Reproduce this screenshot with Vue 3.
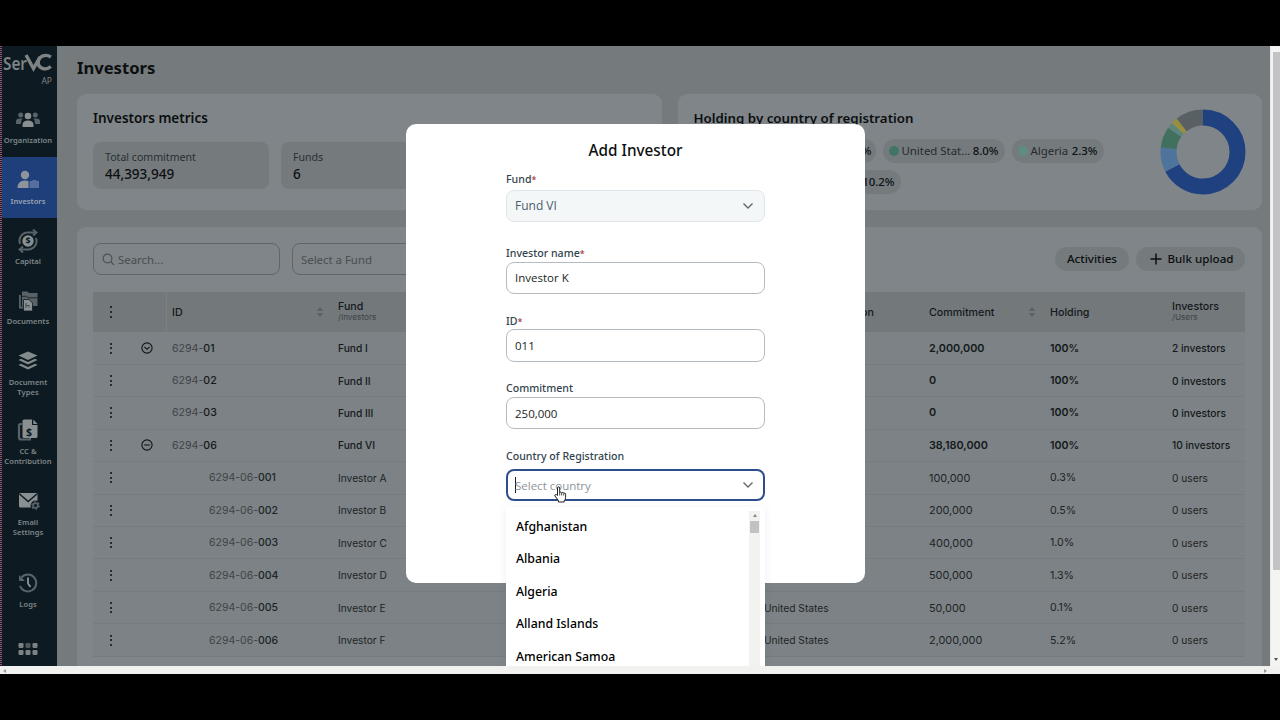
<template>
  <div class="frame">
    <div class="screen">
      <aside class="sidebar">
        <div class="logo">
          <svg width="50" height="28" viewBox="0 -3 50 28">
            <text x="0" y="17" class="logo-text" textLength="24" lengthAdjust="spacingAndGlyphs">Ser</text>
            <path d="M23 2 L30.5 15.500 L37 4" fill="none" stroke="#7e8385" stroke-width="3.400" />
            <path d="M47.800 4.200 C43 0.500 36 3 35.200 9 C35 15.500 42.500 18 47.800 13.500" fill="none" stroke="#7e8385" stroke-width="3.400" />
          </svg>
          <span class="logo-sub">AP</span>
        </div>
        <div
          v-for="item in menu"
          :key="item.icon"
          class="menu-item"
          :class="[item.icon, { active: item.active }]"
        >
          <svg class="menu-icon" width="24" height="24" viewBox="0 0 24 24">
            <g v-if="item.icon === 'organization'">
              <g fill="#596267">
                <circle cx="4.7" cy="7" r="2.5" />
                <circle cx="19.3" cy="7" r="2.5" />
                <path d="M0 16 v-2.500 q0-3 3.500-3 h3 q-1.500 2-1.500 5.500z" />
                <path d="M24 16 v-2.500 q0-3-3.500-3 h-3 q1.500 2 1.500 5.500z" />
              </g>
              <circle cx="12" cy="8" r="3.300" fill="#8a9092" />
              <path d="M6.500 19 v-2 q0-4.500 5.500-4.500 t5.500 4.500 v2z" fill="#8a9092" />
            </g>
            <g v-else-if="item.icon === 'investors'">
              <circle cx="9" cy="7" r="4.200" fill="#8d949b" />
              <path d="M1.500 20 q0-7.500 7.500-7.500 q3 0 3.500 1 v6.500z" fill="#8d949b" />
              <path d="M13.500 13 h3 v-1 h4 v1 h2.500 v7 h-9.500z" fill="#55709c" />
            </g>
            <g v-else-if="item.icon === 'capital'">
              <g fill="none" stroke="#596267" stroke-width="1.900">
                <path d="M4 15 A8.500 8.500 0 0 1 11 3.500 h8" />
                <path d="M20 9 A8.500 8.500 0 0 1 13 20.500 h-8" />
                <path d="M17 0.500 l3.500 3 l-3.500 3" />
                <path d="M7 17.500 l-3.500 3 l3.500 3" />
              </g>
              <circle cx="12" cy="12" r="5.700" fill="#8a9092" />
              <text x="12" y="15.200" class="dollar">$</text>
            </g>
            <g v-else-if="item.icon === 'documents'">
              <path d="M6 2.500 h5.500 l1.500 1.500 h8.500 v13 h-15.500z" fill="#596267" />
              <path d="M3.900 6 v12.500 h5" fill="none" stroke="#596267" stroke-width="1.800" />
              <path d="M6 7.300 h4.500 l1.500 1.500 h9.500" fill="none" stroke="#0d1a21" stroke-width="0.800" />
              <path d="M7.500 10.500 h5.500 l3.500 3.500 v8 h-9z" fill="#8a9092" stroke="#0d1a21" stroke-width="0.800" />
              <path d="M10 14 v5 M10 16.500 h3 v2" fill="none" stroke="#3d464b" />
            </g>
            <g v-else-if="item.icon === 'types'" fill="#838a8c">
              <path d="M12 2.500 l9.500 4 l-9.500 4.500 l-9.500-4.500z" />
              <path d="M2.500 11 l2.500-1.200 l7 3.200 l7-3.200 l2.500 1.200 l-9.500 4.500z" />
              <path d="M2.500 16 l2.500-1.200 l7 3.200 l7-3.200 l2.500 1.200 l-9.500 4.500z" />
            </g>
            <g v-else-if="item.icon === 'contribution'">
              <path d="M6 6 h-1.500 q-1.500 0-1.500 1.500 v12 q0 2 2 2 h9 v-1.500" fill="none" stroke="#596267" stroke-width="2.200" />
              <path d="M8 1.500 h8 v5.500 h5.500 v11.500 q0 1.500-1.500 1.500 h-12 q-1.500 0-1.500-1.500 v-15.500 q0-1.500 1.500-1.500z" fill="#8a9092" />
              <path d="M17.300 1.500 l4.200 4.400 h-4.200z" fill="#8a9092" />
              <text x="13" y="17.500" class="dollar large">$</text>
            </g>
            <g v-else-if="item.icon === 'email'">
              <rect x="3" y="4" width="18.500" height="14.500" rx="1.500" fill="#8a9092" />
              <path d="M3.500 5 l8.700 7.500 l8.700-7.500" fill="none" stroke="#0d1a21" stroke-width="1.500" />
              <circle cx="19.500" cy="16.500" r="5" fill="#0d1a21" />
              <circle cx="19.500" cy="16.500" r="2.400" fill="none" stroke="#596267" stroke-width="1.700" />
              <circle cx="19.500" cy="16.500" r="3.700" fill="none" stroke="#596267" stroke-width="1.300" stroke-dasharray="1.900 1.970" />
            </g>
            <g v-else-if="item.icon === 'logs'">
              <path d="M5.500 6.500 A8.400 8.400 0 1 1 4 15" fill="none" stroke="#596267" stroke-width="2" />
              <path d="M3 4 v6 h6z" fill="#596267" />
              <path d="M12 6.500 v6 l2.500 3.500" fill="none" stroke="#8a9092" stroke-width="1.900" />
            </g>
            <g v-else fill="#7c8385">
              <rect v-for="n in 6" :key="n" :x="2.500 + ((n - 1) % 3) * 7" :y="n > 3 ? 13 : 6" width="5" height="5" rx="1.300" :opacity="n === 2 ? 0.6 : 1" />
            </g>
          </svg>
          <span class="menu-label">{{ item.label }}</span>
        </div>
      </aside>

      <main class="main">
        <h1>Investors</h1>
        <div class="summary">
          <section class="card">
            <h2>Investors metrics</h2>
            <div class="metrics">
              <div v-for="metric in metrics" :key="metric.label" class="metric">
                <span>{{ metric.label }}</span>
                <strong>{{ metric.value }}</strong>
              </div>
            </div>
          </section>
          <section class="card holding">
            <div class="holding-info">
              <h2>Holding by country of registration</h2>
              <div class="chips">
                <div v-for="chip in chips" :key="chip.name" class="chip" :style="{ width: chip.width + 'px' }">
                  <i :style="{ background: chip.color }"></i>
                  <span>{{ chip.name }}</span>
                  <b>{{ chip.value }}</b>
                </div>
              </div>
            </div>
            <svg class="donut" width="86" height="86" viewBox="0 0 86 86">
              <circle
                v-for="slice in slices"
                :key="slice.start"
                cx="43"
                cy="43"
                r="34.500"
                fill="none"
                :stroke="slice.color"
                stroke-width="16"
                pathLength="100"
                :stroke-dasharray="`${slice.size} ${100 - slice.size}`"
                :stroke-dashoffset="-slice.start"
                transform="rotate(-90 43 43)"
              />
            </svg>
          </section>
        </div>

        <section class="card listing">
          <div class="toolbar">
            <div class="filter">
              <svg width="13" height="13" viewBox="0 0 13 13" fill="none" stroke="#4b5154" stroke-width="1.200">
                <circle cx="5.500" cy="5.500" r="4.400" />
                <path d="M8.700 8.700 L12 12" />
              </svg>
              Search...
            </div>
            <div class="filter">Select a Fund</div>
            <div class="actions">
              <button>Activities</button>
              <button>
                <svg width="12" height="12" viewBox="0 0 12 12" stroke="#0c0f10" stroke-width="1.500">
                  <path d="M6 0.500 v11 M0.500 6 h11" />
                </svg>
                Bulk upload
              </button>
            </div>
          </div>

          <div class="table">
            <div class="row head">
              <div class="dots"><i></i><i></i><i></i></div>
              <div></div>
              <div class="id-head">ID <span class="sort"></span></div>
              <div class="stacked">Fund<small>/Investors</small></div>
              <div class="country-head">Registration</div>
              <div>Commitment <span class="sort"></span></div>
              <div>Holding</div>
              <div class="stacked">Investors<small>/Users</small></div>
            </div>
            <div v-for="row in rows" :key="row.id" class="row" :class="{ child: row.child }">
              <div class="dots"><i></i><i></i><i></i></div>
              <div class="toggle">
                <svg v-if="row.toggle" width="12" height="12" viewBox="0 0 12 12" fill="none" stroke="#101415" stroke-width="1.100">
                  <circle cx="6" cy="6" r="5.100" />
                  <path :d="row.toggle === 'open' ? 'M3.200 6 h5.600' : 'M3.500 5 l2.500 2.300 l2.500-2.300'" />
                </svg>
              </div>
              <div class="id"><span>{{ row.prefix }}</span>{{ row.id }}</div>
              <div class="name">{{ row.name }}</div>
              <div class="name">{{ row.country }}</div>
              <div class="amount">{{ row.commitment }}</div>
              <div class="share">{{ row.holding }}</div>
              <div class="name">{{ row.users }}</div>
            </div>
          </div>
        </section>
      </main>

      <div class="modal">
        <h3>Add Investor</h3>
        <div class="field fund">
          <label>Fund<em>*</em></label>
          <div class="control disabled">Fund VI
            <svg width="12" height="8" viewBox="0 0 12 8"><path d="M1.500 1.500 L6 6 L10.500 1.500" /></svg>
          </div>
        </div>
        <div class="field">
          <label>Investor name<em>*</em></label>
          <div class="control">Investor K</div>
        </div>
        <div class="field">
          <label>ID<em>*</em></label>
          <div class="control">011</div>
        </div>
        <div class="field">
          <label>Commitment</label>
          <div class="control">250,000</div>
        </div>
        <div class="field country">
          <label>Country of Registration</label>
          <div class="control focused"><span class="caret"></span>Select country
            <svg width="12" height="8" viewBox="0 0 12 8"><path d="M1.500 1.500 L6 6 L10.500 1.500" /></svg>
          </div>
          <div class="dropdown">
            <ul>
              <li v-for="country in countries" :key="country">{{ country }}</li>
            </ul>
            <div class="dropdown-scroll"><i></i></div>
          </div>
          <svg class="cursor" width="13" height="17" viewBox="0 0 13 17">
            <path d="M3.500 9.500 V2 q0-1.200 1.100-1.200 t1.100 1.200 V6.500 q1-.9 2 .2 q1.100-.8 2 .3 q1.700-.5 1.900 1.200 v3.300 q0 2-1.400 3.200 v1.300 h-5.700 v-1.300 l-3.500-4.700 q-.6-1.200.5-1.500 q.9-.2 2 1z" fill="#fff" stroke="#222" stroke-width="1" />
            <path d="M5.700 6.500 v3 M7.700 7 v2.500 M9.700 7.500 v2" stroke="#222" stroke-width="0.800" />
          </svg>
        </div>
      </div>

      <div class="scroll-y"><i></i></div>
      <div class="scroll-x"></div>
    </div>
  </div>
</template>

<script setup>
const menu = [
  { icon: 'organization', label: 'Organization' },
  { icon: 'investors', label: 'Investors', active: true },
  { icon: 'capital', label: 'Capital' },
  { icon: 'documents', label: 'Documents' },
  { icon: 'types', label: 'Document Types' },
  { icon: 'contribution', label: 'CC & Contribution' },
  { icon: 'email', label: 'Email Settings' },
  { icon: 'logs', label: 'Logs' },
  { icon: 'more', label: '' },
];

const metrics = [
  { label: 'Total commitment', value: '44,393,949' },
  { label: 'Funds', value: '6' },
  { label: 'Investors', value: '12' },
];

const chips = [
  { name: 'Israel', value: '67.4%', color: '#1f4180', width: 90 },
  { name: 'Cana...', value: '9.3%', color: '#55799f', width: 85 },
  { name: 'United Stat...', value: '8.0%', color: '#407565', width: 122 },
  { name: 'Algeria', value: '2.3%', color: '#5f8c82', width: 92 },
  { name: 'France', value: '2.4%', color: '#a39a45', width: 100 },
  { name: 'Others', value: '10.2%', color: '#596064', width: 100 },
];

const slices = [
  { start: 0, size: 67.4, color: '#1f4180' },
  { start: 67.4, size: 9.3, color: '#4f749b' },
  { start: 76.7, size: 8, color: '#42705f' },
  { start: 84.7, size: 2.3, color: '#5b857d' },
  { start: 87, size: 2.4, color: '#98903f' },
  { start: 89.4, size: 10.6, color: '#596064' },
];

const rows = [
  { prefix: '6294-', id: '01', name: 'Fund I', commitment: '2,000,000', holding: '100%', users: '2 investors', toggle: 'closed' },
  { prefix: '6294-', id: '02', name: 'Fund II', commitment: '0', holding: '100%', users: '0 investors' },
  { prefix: '6294-', id: '03', name: 'Fund III', commitment: '0', holding: '100%', users: '0 investors' },
  { prefix: '6294-', id: '06', name: 'Fund VI', commitment: '38,180,000', holding: '100%', users: '10 investors', toggle: 'open' },
  { prefix: '6294-06-', id: '001', name: 'Investor A', country: 'United States', commitment: '100,000', holding: '0.3%', users: '0 users', child: true },
  { prefix: '6294-06-', id: '002', name: 'Investor B', country: 'United States', commitment: '200,000', holding: '0.5%', users: '0 users', child: true },
  { prefix: '6294-06-', id: '003', name: 'Investor C', country: 'United States', commitment: '400,000', holding: '1.0%', users: '0 users', child: true },
  { prefix: '6294-06-', id: '004', name: 'Investor D', country: 'United States', commitment: '500,000', holding: '1.3%', users: '0 users', child: true },
  { prefix: '6294-06-', id: '005', name: 'Investor E', country: 'United States', commitment: '50,000', holding: '0.1%', users: '0 users', child: true },
  { prefix: '6294-06-', id: '006', name: 'Investor F', country: 'United States', commitment: '2,000,000', holding: '5.2%', users: '0 users', child: true },
];

const countries = ['Afghanistan', 'Albania', 'Algeria', 'Alland Islands', 'American Samoa'];
</script>

<style>
body {
  margin: 0;
  background: #000;
}
</style>

<style scoped>
* {
  box-sizing: border-box;
}

.frame {
  height: 720px;
  padding: 46px 0;
  background: #000;
  overflow: hidden;
  font-family: "Noto Sans", "Open Sans", sans-serif;
  color: #0c0f10;
}

.screen {
  position: relative;
  display: grid;
  grid-template: 620px 8px / 57px 1213px 10px;
  overflow: hidden;
}

.sidebar {
  position: relative;
  background: #0d1a21;
  overflow: hidden;
}

.sidebar::before {
  content: "";
  position: absolute;
  left: 0;
  top: 0;
  bottom: 0;
  width: 1.5px;
  background: repeating-linear-gradient(#8c5c70 0 1px, #1c1420 1px 2px);
}

.logo {
  height: 51px;
  padding: 4px 0 0 3px;
  color: #7e8385;
}

.logo svg {
  display: block;
}

.logo-text {
  font: 600 18px "Noto Sans", sans-serif;
  fill: #7e8385;
}

.logo-sub {
  display: block;
  margin: -3px 5px 0 0;
  font-size: 8.5px;
  line-height: 12px;
  text-align: right;
}

.menu-item {
  display: flex;
  flex-direction: column;
  align-items: center;
  height: 60.4px;
  padding: 10.8px 1px 0 0;
  color: #7e8588;
}

.menu-item.active {
  background: #1f3f7a;
  color: #9aa4b3;
}

.menu-item.types {
  height: 69px;
}

.menu-item.contribution {
  height: 71px;
}

.menu-item.email {
  height: 82px;
}

.menu-item.logs {
  height: 66px;
}

.menu-icon {
  flex: none;
}

.menu-label {
  margin-top: 3.4px;
  font-size: 7.6px;
  font-weight: 600;
  line-height: 10px;
  text-align: center;
}

.menu-item.types .menu-label,
.menu-item.email .menu-label {
  width: 44px;
}

.dollar {
  font: 700 9px "Noto Sans", sans-serif;
  fill: #0d1a21;
  text-anchor: middle;
}

.dollar.large {
  font-size: 10.5px;
}

.main {
  padding: 0 8px 0 20px;
  background: #757a7d;
  overflow: hidden;
}

h1 {
  height: 48px;
  margin: 0;
  font-size: 16.6px;
  font-weight: 700;
  line-height: 43px;
}

h2 {
  margin: 0;
  font-size: 13.5px;
  font-weight: 600;
  line-height: 20px;
}

.holding h2 {
  font-size: 13.3px;
}

.summary {
  display: grid;
  grid-template-columns: 1fr 1fr;
  gap: 16px;
}

.card {
  height: 116px;
  padding: 14px 16px;
  border-radius: 9px;
  background: #7f8588;
}

.metrics {
  display: grid;
  grid-template-columns: repeat(3, 176px);
  gap: 12px;
  margin-top: 14px;
}

.metric {
  height: 47px;
  padding: 7px 12px;
  border-radius: 8px;
  background: #757a7d;
}

.metric span {
  display: block;
  font-size: 10.6px;
  line-height: 17px;
  color: #253036;
}

.metric strong {
  display: block;
  font-size: 13.5px;
  font-weight: 500;
  line-height: 17px;
}

.holding {
  display: flex;
  justify-content: space-between;
}

.chips {
  display: flex;
  flex-wrap: wrap;
  gap: 7px;
  width: 430px;
  margin-top: 11px;
}

.chip {
  display: flex;
  align-items: center;
  height: 24px;
  padding: 0 6px;
  border-radius: 12px;
  background: #757a7d;
  font-size: 11.4px;
  line-height: 22px;
  white-space: nowrap;
  color: #242b2f;
}

.chip i {
  flex: none;
  width: 10px;
  height: 10px;
  margin-right: 3px;
  border-radius: 50%;
}

.chip b {
  margin-left: auto;
  font-weight: 500;
  color: #0c1216;
}

.donut {
  flex: none;
  margin: 1px 0 0;
}

.listing {
  height: 500px;
  margin-top: 17px;
  padding: 16px 17px 16px 16px;
}

.toolbar {
  display: flex;
  gap: 12px;
  height: 49px;
}

.filter {
  display: flex;
  align-items: center;
  gap: 3px;
  width: 187px;
  height: 32px;
  padding: 0 8px;
  border: 1px solid #5f6568;
  border-radius: 8px;
  font-size: 11.4px;
  color: #484e51;
}

.actions {
  display: flex;
  gap: 7px;
  margin: 4px 0 0 auto;
}

button {
  display: flex;
  align-items: center;
  justify-content: center;
  gap: 6px;
  width: 74px;
  height: 24px;
  padding: 0 0 1px;
  border: 0;
  border-radius: 12px;
  background: #757a7d;
  font: 500 11.6px "Noto Sans", sans-serif;
  color: #0c0f10;
}

button + button {
  width: 109px;
  padding-left: 2px;
}

.table {
  font-family: Inter, sans-serif;
  font-size: 10.6px;
}

.row {
  display: grid;
  grid-template-columns: 36px 37px 165px 426px 165px 121px 122px 80px;
  height: 32.45px;
  border-bottom: 1px solid #757b7e;
  background: #7c8285;
  color: #14191b;
  font-weight: 500;
}

.row > div {
  display: flex;
  align-items: center;
  padding-left: 7px;
  white-space: nowrap;
}

.row.head {
  height: 40.4px;
  border: 0;
  background: #73787b;
  font-size: 10.7px;
}

.row.head > .id-head {
  padding-left: 5px;
  border-left: 1px solid #7c8184;
}

.row > .id {
  padding-left: 6px;
}

.row > .dots,
.row > .toggle {
  flex-direction: column;
  justify-content: center;
  gap: 2.5px;
  padding: 0;
}

.row > .toggle {
  padding-right: 1px;
}

.dots i {
  width: 2px;
  height: 2px;
  border-radius: 50%;
  background: #0c0f10;
}

.head .dots i {
  width: 2.5px;
  height: 2.5px;
}

.row > .stacked {
  flex-direction: column;
  align-items: flex-start;
  justify-content: center;
  padding-bottom: 1px;
  line-height: 12px;
}

.stacked small {
  font-size: 8.2px;
  font-weight: 400;
  line-height: 9px;
  color: #3b4347;
}

.row > .country-head {
  justify-content: flex-end;
  padding-right: 48px;
}

.sort {
  display: flex;
  flex-direction: column;
  gap: 2px;
  margin: 0 8px 0 auto;
}

.sort::before,
.sort::after {
  content: "";
  border: 3.5px solid transparent;
  border-top: 0;
  border-bottom: 4.5px solid #5c6265;
}

.sort::after {
  transform: rotate(180deg);
}

.id span {
  font-weight: 400;
  color: #3d4548;
}

.row > .name {
  font-size: 10.2px;
}

.row > .amount {
  font-size: 10.8px;
}

.row.child {
  font-weight: 400;
  color: #1d2427;
}

.row.child > .id {
  padding-left: 43px;
  font-size: 10.5px;
  font-weight: 500;
}

.row.child > .amount {
  font-size: 10.9px;
}

.row:not(.child) .amount,
.row:not(.child) .share {
  font-weight: 600;
}

.modal {
  position: absolute;
  left: 406px;
  top: 78px;
  width: 459px;
  height: 459px;
  padding: 0 100px;
  border-radius: 10px;
  background: #fff;
}

h3 {
  height: 47px;
  margin: 0;
  font-size: 15.3px;
  font-weight: 500;
  line-height: 53px;
  text-align: center;
}

.field {
  height: 67.7px;
}

.field.fund {
  height: 73px;
}

.field.country {
  position: relative;
}

label {
  display: block;
  height: 17.5px;
  font-size: 10.6px;
  font-weight: 500;
  line-height: 18px;
  color: #33434d;
}

.fund label {
  height: 18.5px;
  line-height: 16px;
}

.country label {
  height: 21.9px;
}

em {
  font-style: normal;
  font-size: 9px;
  color: #a33636;
}

.control {
  display: flex;
  align-items: center;
  width: 259px;
  height: 32.5px;
  padding: 0 10px 0 8px;
  border: 1px solid #b4bcc2;
  border-radius: 8px;
  background: #fff;
  font: 11.5px "Open Sans", sans-serif;
  color: #1a1f22;
}

.control.disabled {
  border-color: #dfe5e8;
  background: #f4f7f8;
  font-size: 12px;
  color: #4a5d6b;
}

.control.focused {
  border: 2px solid #2c4f8c;
  padding: 0 9px 0 7px;
  color: #8c949a;
}

.control svg {
  margin-left: auto;
  fill: none;
  stroke: #61686c;
  stroke-width: 1.4;
}

.caret {
  width: 1px;
  height: 16px;
  margin-right: -1px;
  background: #222;
}

.dropdown {
  position: absolute;
  top: 60px;
  left: 0;
  display: flex;
  width: 259px;
  height: 220px;
  padding: 4px 5px 0 0;
  background: #fff;
  box-shadow: 0 2px 8px rgba(60, 90, 130, 0.1);
}

ul {
  flex: 1;
  margin: 0;
  padding: 0;
  list-style: none;
}

li {
  padding-left: 10px;
  font-size: 12.3px;
  font-weight: 500;
  line-height: 32.4px;
  color: #000;
}

.dropdown-scroll {
  width: 11px;
  padding: 3px 1px;
  background: #f2f2f1;
}

.dropdown-scroll::before {
  content: "";
  display: block;
  width: 0;
  margin: 0 auto 4px;
  border: 2.5px solid transparent;
  border-top: 0;
  border-bottom: 3px solid #888;
}

.dropdown-scroll i {
  display: block;
  height: 12px;
  background: #c2c2c2;
}

.cursor {
  position: absolute;
  left: 48px;
  top: 39px;
}

.scroll-y {
  position: relative;
  padding: 6px 0 0 2px;
  border-left: 1px solid #e8e8e8;
  background: #f4f4f3;
}

.scroll-y i {
  display: block;
  height: 518px;
  background: #c1c3c4;
}

.scroll-y::after {
  content: "";
  position: absolute;
  left: 3px;
  bottom: 5px;
  border: 2.5px solid transparent;
  border-bottom: 0;
  border-top: 3px solid #555;
}

.scroll-x {
  position: relative;
  grid-column: 1 / -1;
  background: #f1f1ef;
}

.scroll-x::before,
.scroll-x::after {
  content: "";
  position: absolute;
  top: 3px;
  left: 3px;
  border: 2.5px solid transparent;
  border-left: 0;
  border-right: 3px solid #999;
}

.scroll-x::after {
  left: 1264px;
  transform: rotate(180deg);
}
</style>
